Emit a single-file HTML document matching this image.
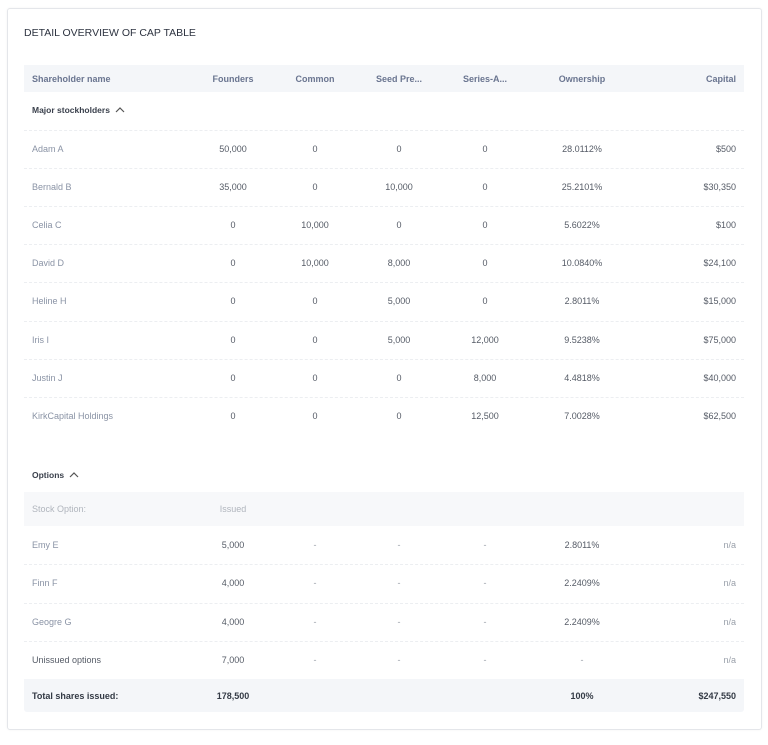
<!DOCTYPE html>
<html><head><style>
body{margin:0;width:768px;height:745px;background:#fff;font-family:"Liberation Sans",sans-serif;position:relative;overflow:hidden}
.card{position:absolute;left:7px;top:8px;width:753px;height:720px;border:1px solid #e4e6ea;border-radius:3px;box-shadow:0 0 2px rgba(0,0,0,.05)}
.t{position:absolute;white-space:nowrap;font-size:9px;line-height:12px;transform:translateY(-6px)}
.c{transform:translate(-50%,-6px)}
.r{transform:translate(-100%,-6px)}
.band{position:absolute;left:24px;width:720px;background:#f4f6f9}
.sep{position:absolute;left:24px;width:720px;border-top:1px dashed #eceef1}
.h{color:#6a7590;font-weight:bold}
.n{color:#8a93a5}
.v{color:#555b66}
.d{color:#9aa0aa}
.b{color:#333a45;font-weight:bold}
</style></head><body>
<div class="card"></div>
<div class="t" style="left:24px;top:33px;font-size:10.5px;color:#2d3340">DETAIL OVERVIEW OF CAP TABLE</div>
<div class="band" style="top:65px;height:27px"></div>
<div class="t h" style="left:32px;top:79px">Shareholder name</div>
<div class="t h c" style="left:233px;top:79px">Founders</div>
<div class="t h c" style="left:315px;top:79px">Common</div>
<div class="t h c" style="left:399px;top:79px">Seed Pre...</div>
<div class="t h c" style="left:485px;top:79px">Series-A...</div>
<div class="t h c" style="left:582px;top:79px">Ownership</div>
<div class="t h r" style="left:736px;top:79px">Capital</div>
<div class="t b" style="left:32px;top:110px;font-size:8.5px;color:#3a404c">Major stockholders <svg width="10" height="7" style="margin-left:3px" viewBox="0 0 10 7"><path d="M1 6L5 2L9 6" fill="none" stroke="#555" stroke-width="1.2"/></svg></div>
<div id="rows"></div>
<div class="t b" style="left:32px;top:475px;font-size:8.5px;color:#3a404c">Options <svg width="10" height="7" style="margin-left:3px" viewBox="0 0 10 7"><path d="M1 6L5 2L9 6" fill="none" stroke="#555" stroke-width="1.2"/></svg></div>
<div class="band" style="top:492px;height:34px;background:#f7f8fa"></div>
<div class="t" style="left:32px;top:509px;color:#b0b5bd">Stock Option:</div>
<div class="t c" style="left:233px;top:509px;color:#b0b5bd">Issued</div>
<div class="band" style="top:679px;height:33px;border-radius:0 0 3px 3px"></div>
<div class="t b" style="left:32px;top:696px">Total shares issued:</div>
<div class="t b c" style="left:233px;top:696px">178,500</div>
<div class="t b c" style="left:582px;top:696px">100%</div>
<div class="t b r" style="left:736px;top:696px">$247,550</div>
<script>
var rows=[["Adam A","50,000","0","0","0","28.0112%","$500"],["Bernald B","35,000","0","10,000","0","25.2101%","$30,350"],["Celia C","0","10,000","0","0","5.6022%","$100"],["David D","0","10,000","8,000","0","10.0840%","$24,100"],["Heline H","0","0","5,000","0","2.8011%","$15,000"],["Iris I","0","0","5,000","12,000","9.5238%","$75,000"],["Justin J","0","0","0","8,000","4.4818%","$40,000"],["KirkCapital Holdings","0","0","0","12,500","7.0028%","$62,500"]];
var opt=[["Emy E","5,000","2.8011%"],["Finn F","4,000","2.2409%"],["Geogre G","4,000","2.2409%"],["Unissued options","7,000","-"]];
var cx=[233,315,399,485,582],h="";
rows.forEach(function(r,i){var y=149+i*38.1;h+='<div class="sep" style="top:'+(y-19)+'px"></div>';h+='<div class="t n" style="left:32px;top:'+y+'px">'+r[0]+'</div>';for(var k=0;k<5;k++)h+='<div class="t v c" style="left:'+cx[k]+'px;top:'+y+'px">'+r[k+1]+'</div>';h+='<div class="t v r" style="left:736px;top:'+y+'px">'+r[6]+'</div>';});
opt.forEach(function(r,i){var y=545+i*38.3;if(i>0)h+='<div class="sep" style="top:'+(y-19)+'px"></div>';h+='<div class="t '+(i==3?'v':'n')+'" style="left:32px;top:'+y+'px">'+r[0]+'</div>';h+='<div class="t v c" style="left:233px;top:'+y+'px">'+r[1]+'</div>';for(var k=1;k<4;k++)h+='<div class="t d c" style="left:'+cx[k]+'px;top:'+y+'px">-</div>';h+='<div class="t '+(i==3?'d':'v')+' c" style="left:582px;top:'+y+'px">'+r[2]+'</div>';h+='<div class="t d r" style="left:736px;top:'+y+'px">n/a</div>';});
document.getElementById('rows').innerHTML=h;
</script>
</body></html>
